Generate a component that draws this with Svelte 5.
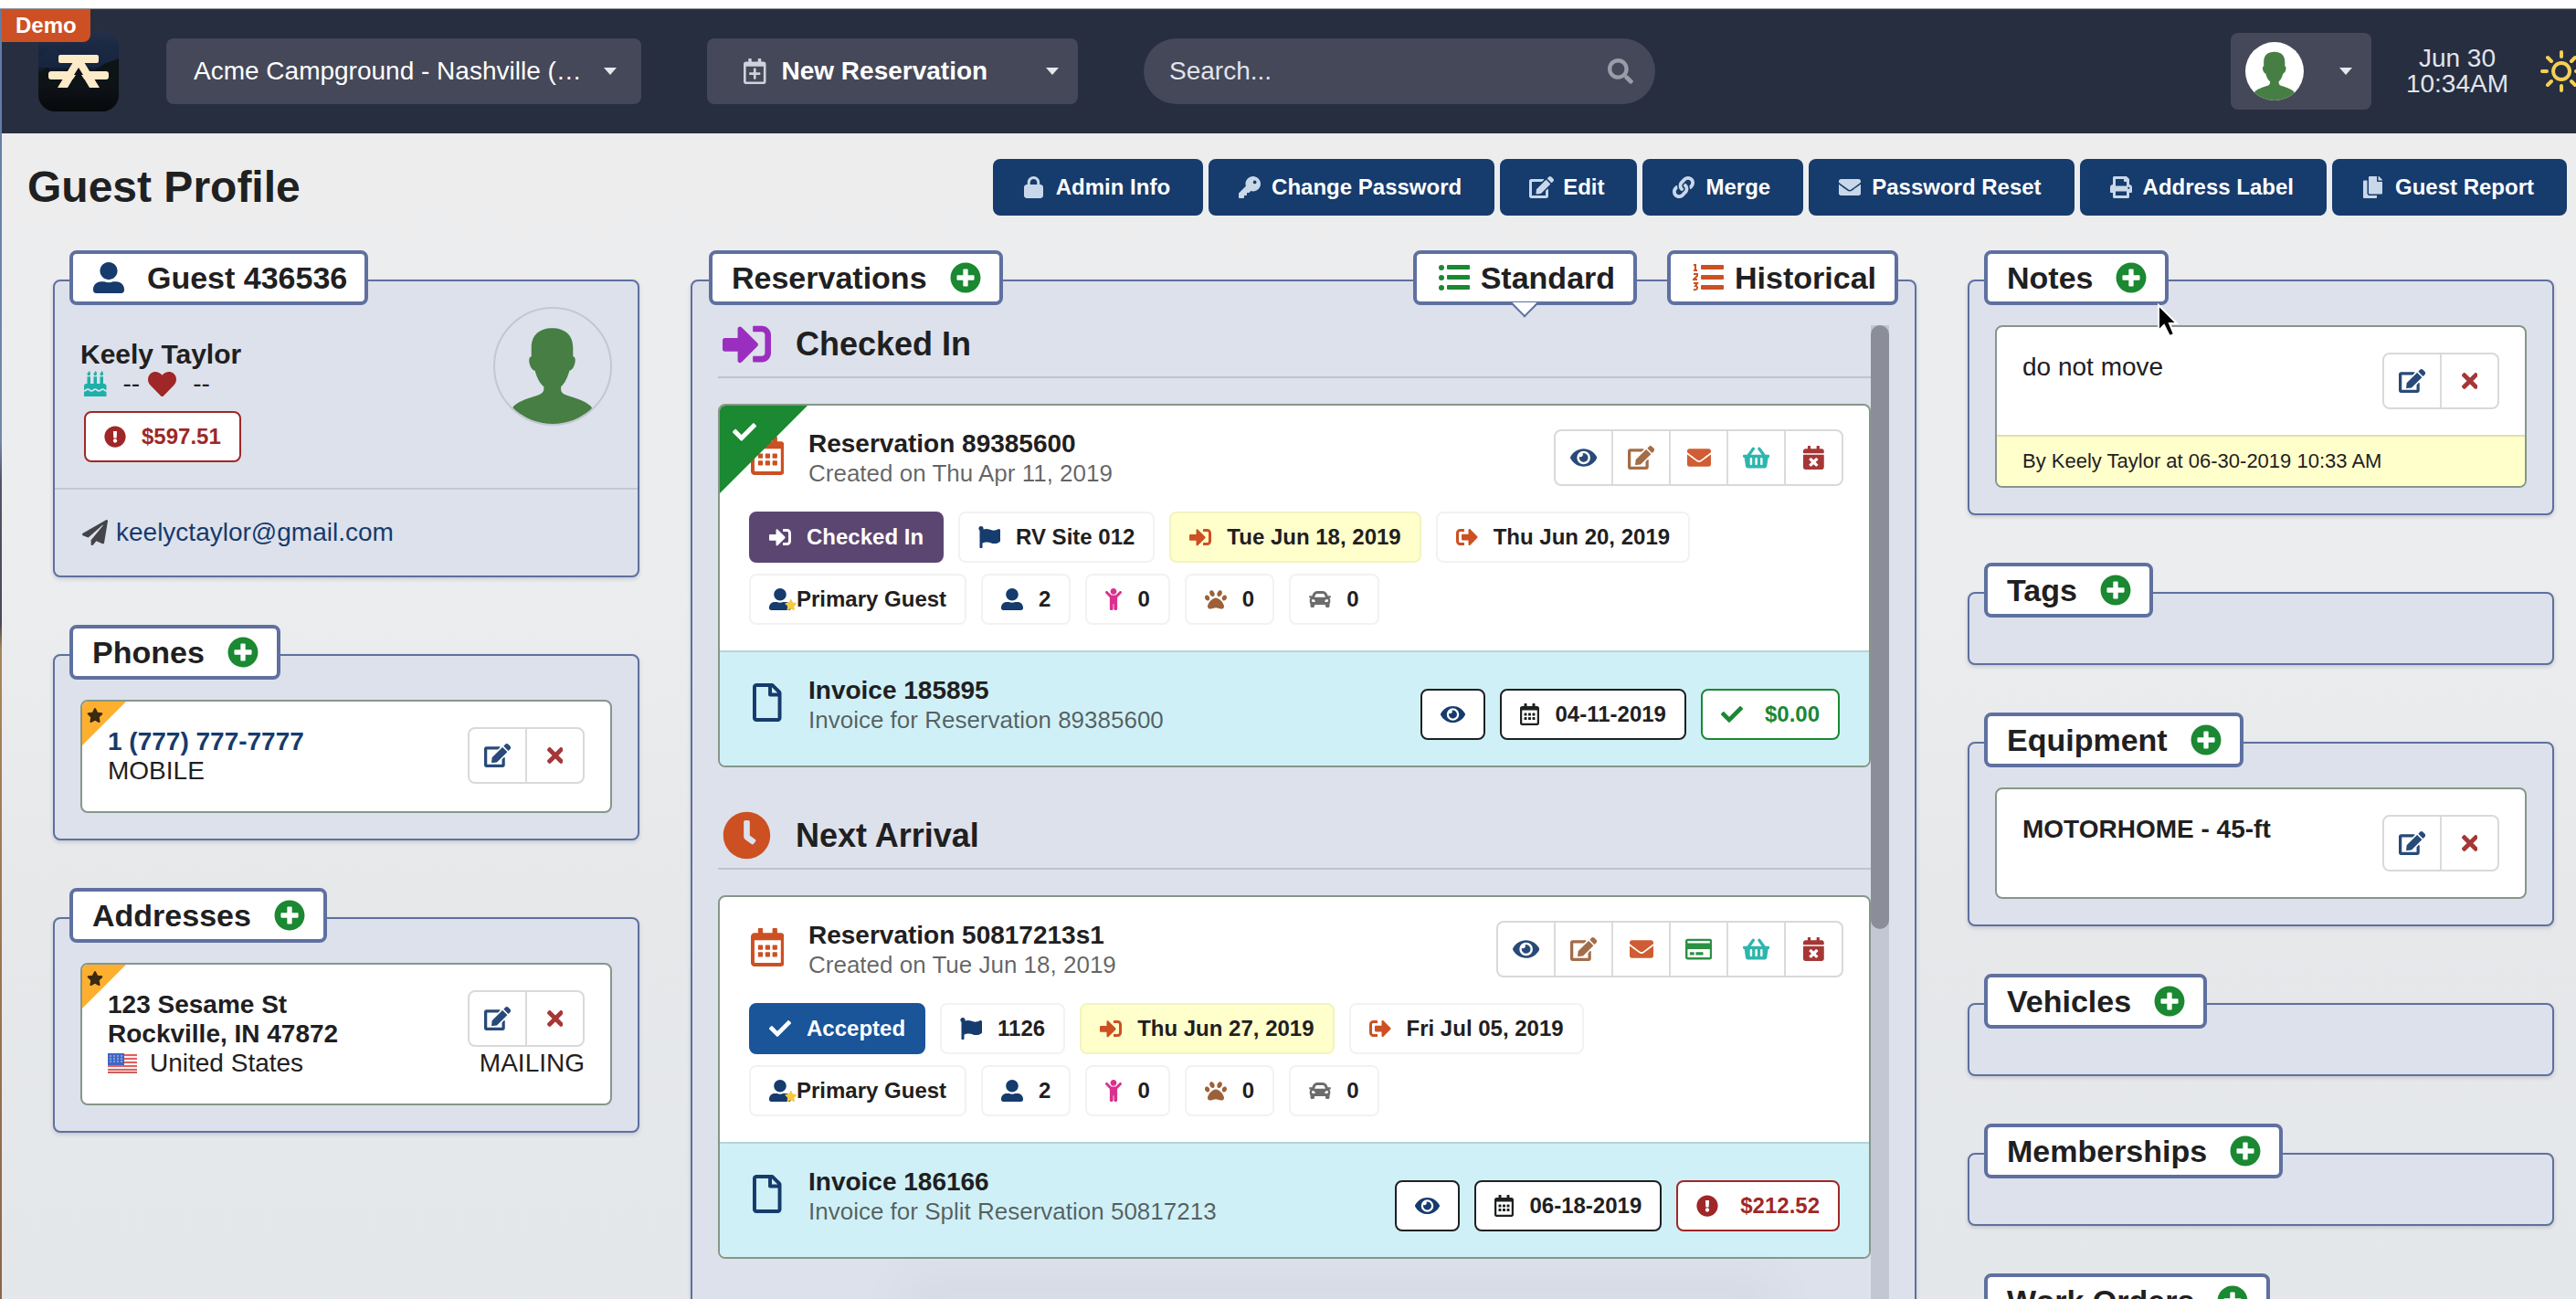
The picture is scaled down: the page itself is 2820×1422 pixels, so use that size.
<script>
  // [viewBox width, path]
  const icons = {
    lock: [448, "M144 144v48H304V144c0-44.2-35.8-80-80-80s-80 35.8-80 80zM80 192V144C80 64.5 144.5 0 224 0s144 64.5 144 144v48h16c35.3 0 64 28.7 64 64V448c0 35.3-28.7 64-64 64H64c-35.3 0-64-28.7-64-64V256c0-35.3 28.7-64 64-64H80z"],
    key: [512, "M336 352c97.2 0 176-78.8 176-176S433.2 0 336 0S160 78.8 160 176c0 18.7 2.9 36.8 8.3 53.7L7 391c-4.5 4.5-7 10.6-7 17v80c0 13.3 10.7 24 24 24h80c13.3 0 24-10.7 24-24V448h40c13.3 0 24-10.7 24-24V384h40c6.4 0 12.5-2.5 17-7l33.3-33.3c16.9 5.4 35 8.3 53.7 8.3zM376 96a40 40 0 1 1 0 80 40 40 0 1 1 0-80z"],
    edit: [576, "M402.6 83.2l90.2 90.2c3.8 3.8 3.8 10 0 13.8L274.4 405.6l-92.8 10.3c-12.4 1.4-22.9-9.1-21.5-21.5l10.3-92.8L388.8 83.2c3.8-3.8 10-3.8 13.8 0zm162-22.9l-48.8-48.8c-15.2-15.2-39.9-15.2-55.2 0l-35.4 35.4c-3.8 3.8-3.8 10 0 13.8l90.2 90.2c3.8 3.8 10 3.8 13.8 0l35.4-35.4c15.2-15.3 15.2-40 0-55.2zM384 346.2V448H64V128h229.8c3.2 0 6.2-1.3 8.5-3.5l40-40c7.6-7.6 2.2-20.5-8.5-20.5H48C21.5 64 0 85.5 0 112v352c0 26.5 21.5 48 48 48h352c26.5 0 48-21.5 48-48V306.2c0-10.7-12.9-16-20.5-8.5l-40 40c-2.2 2.3-3.5 5.3-3.5 8.5z"],
    link: [512, "M326.612 185.391c59.747 59.809 58.927 155.698.36 214.59-.11.12-.24.25-.36.37l-67.2 67.2c-59.27 59.27-155.699 59.262-214.96 0-59.27-59.26-59.27-155.7 0-214.96l37.106-37.106c9.84-9.84 26.786-3.3 27.294 10.606.648 17.722 3.826 35.527 9.69 52.721 1.986 5.822.567 12.262-3.783 16.612l-13.087 13.087c-28.026 28.026-28.905 73.66-1.155 101.96 28.024 28.579 74.086 28.749 102.325.51l67.2-67.19c28.191-28.191 28.073-73.757 0-101.83-3.701-3.694-7.429-6.564-10.341-8.569a16.037 16.037 0 0 1-6.947-12.606c-.396-10.567 3.348-21.456 11.698-29.806l21.054-21.055c5.521-5.521 14.182-6.199 20.584-1.731a152.482 152.482 0 0 1 20.522 17.197zM467.547 44.449c-59.261-59.262-155.69-59.27-214.96 0l-67.2 67.2c-.12.12-.25.25-.36.37-58.566 58.892-59.387 154.781.36 214.59a152.454 152.454 0 0 0 20.521 17.196c6.402 4.468 15.064 3.789 20.584-1.731l21.054-21.055c8.35-8.35 12.094-19.239 11.698-29.806a16.037 16.037 0 0 0-6.947-12.606c-2.912-2.005-6.64-4.875-10.341-8.569-28.073-28.073-28.191-73.639 0-101.83l67.2-67.19c28.239-28.239 74.3-28.069 102.325.51 27.75 28.3 26.872 73.934-1.155 101.96l-13.087 13.087c-4.35 4.35-5.769 10.79-3.783 16.612 5.864 17.194 9.042 34.999 9.69 52.721.509 13.906 17.454 20.446 27.294 10.606l37.106-37.106c59.271-59.259 59.271-155.699.001-214.959z"],
    envelope: [512, "M502.3 190.8c3.9-3.1 9.7-.2 9.7 4.7V400c0 26.5-21.5 48-48 48H48c-26.5 0-48-21.5-48-48V195.6c0-5 5.7-7.8 9.7-4.7 22.4 17.4 52.1 39.5 154.1 113.6 21.1 15.4 56.7 47.8 92.2 47.6 35.7.3 72-32.8 92.3-47.6 102-74.1 131.6-96.3 154-113.7zM256 320c23.2.4 56.6-29.2 73.4-41.4 132.7-96.3 142.8-104.7 173.4-128.7 5.8-4.5 9.2-11.5 9.2-18.9v-19c0-26.5-21.5-48-48-48H48c-26.5 0-48 21.5-48 48v19c0 7.4 3.4 14.3 9.2 18.9 30.6 23.9 40.7 32.4 173.4 128.7 16.8 12.2 50.2 41.8 73.4 41.4z"],
    print: [512, "M448 192V77.25c0-8.49-3.37-16.62-9.37-22.63L393.37 9.37c-6-6-14.14-9.37-22.63-9.37H96C78.33 0 64 14.33 64 32v160c-35.35 0-64 28.65-64 64v112c0 8.84 7.16 16 16 16h48v96c0 17.67 14.33 32 32 32h320c17.67 0 32-14.33 32-32v-96h48c8.84 0 16-7.16 16-16V256c0-35.35-28.65-64-64-64zm-64 256H128v-96h256v96zm0-224H128V64h192v48c0 8.84 7.16 16 16 16h48v96zm48 72c-13.25 0-24-10.75-24-24 0-13.26 10.75-24 24-24s24 10.74 24 24c0 13.25-10.75 24-24 24z"],
    copy: [448, "M320 448v40c0 13.255-10.745 24-24 24H24c-13.255 0-24-10.745-24-24V120c0-13.255 10.745-24 24-24h72v296c0 30.879 25.121 56 56 56h168zm0-344V0H152c-13.255 0-24 10.745-24 24v368c0 13.255 10.745 24 24 24h272c13.255 0 24-10.745 24-24V128H344c-13.2 0-24-10.8-24-24zm120.971-31.029L375.029 7.029A24 24 0 0 0 358.059 0H352v96h96v-6.059a24 24 0 0 0-7.029-16.97z"],
    user: [512, "M256 288c79.5 0 144-64.5 144-144S335.5 0 256 0 112 64.5 112 144s64.5 144 144 144zm128 32h-55.1c-22.2 10.2-46.9 16-72.9 16s-50.6-5.8-72.9-16H128c-70.7 0-128 57.3-128 128v16c0 26.5 21.5 48 48 48h416c26.5 0 48-21.5 48-48v-16c0-70.7-57.3-128-128-128z"],
    plus: [512, "M256 8C119 8 8 119 8 256s111 248 248 248 248-111 248-248S393 8 256 8zm144 276c0 6.6-5.4 12-12 12h-92v92c0 6.6-5.4 12-12 12h-56c-6.6 0-12-5.4-12-12v-92h-92c-6.6 0-12-5.4-12-12v-56c0-6.6 5.4-12 12-12h92v-92c0-6.6 5.4-12 12-12h56c6.6 0 12 5.4 12 12v92h92c6.6 0 12 5.4 12 12v56z"],
    alert: [512, "M504 256c0 136.997-111.043 248-248 248S8 392.997 8 256C8 119.083 119.043 8 256 8s248 111.083 248 248zm-248 50c-25.405 0-46 20.595-46 46s20.595 46 46 46 46-20.595 46-46-20.595-46-46-46zm-43.673-165.346l7.418 136c.347 6.364 5.609 11.346 11.982 11.346h48.546c6.373 0 11.635-4.982 11.982-11.346l7.418-136c.375-6.874-5.098-12.654-11.982-12.654h-63.383c-6.884 0-12.356 5.78-11.981 12.654z"],
    clock: [512, "M256 8C119 8 8 119 8 256S119 504 256 504 504 393 504 256 393 8 256 8zm92.49 313l-20 25a16 16 0 0 1-22.49 2.5l-67-49.72a40 40 0 0 1-15-31.23V112a16 16 0 0 1 16-16h32a16 16 0 0 1 16 16V256l58 42.5A16 16 0 0 1 348.49 321Z"],
    check: [512, "M173.898 439.404l-166.4-166.4c-9.997-9.997-9.997-26.206 0-36.204l36.203-36.204c9.997-9.998 26.207-9.998 36.204 0L192 312.69 432.095 72.596c9.997-9.997 26.207-9.997 36.204 0l36.203 36.204c9.997 9.997 9.997 26.206 0 36.204l-294.4 294.401c-9.998 9.997-26.207 9.997-36.204-.001z"],
    times: [352, "M242.72 256l100.07-100.07c12.28-12.28 12.28-32.19 0-44.48l-22.24-22.24c-12.28-12.28-32.19-12.28-44.48 0L176 189.28 75.93 89.21c-12.28-12.28-32.19-12.28-44.48 0L9.21 111.45c-12.28 12.28-12.28 32.19 0 44.48L109.28 256 9.21 356.07c-12.28 12.28-12.28 32.19 0 44.48l22.24 22.24c12.28 12.28 32.2 12.28 44.48 0L176 322.72l100.07 100.07c12.28 12.28 32.2 12.28 44.48 0l22.24-22.24c12.28-12.28 12.28-32.19 0-44.48L242.72 256z"],
    calendar: [448, "M148 288h-40c-6.6 0-12-5.4-12-12v-40c0-6.6 5.4-12 12-12h40c6.6 0 12 5.4 12 12v40c0 6.6-5.4 12-12 12zm108-12v-40c0-6.6-5.4-12-12-12h-40c-6.6 0-12 5.4-12 12v40c0 6.6 5.4 12 12 12h40c6.6 0 12-5.4 12-12zm96 0v-40c0-6.6-5.4-12-12-12h-40c-6.6 0-12 5.4-12 12v40c0 6.6 5.4 12 12 12h40c6.6 0 12-5.4 12-12zm-96 96v-40c0-6.6-5.4-12-12-12h-40c-6.6 0-12 5.4-12 12v40c0 6.6 5.4 12 12 12h40c6.6 0 12-5.4 12-12zm-96 0v-40c0-6.6-5.4-12-12-12h-40c-6.6 0-12 5.4-12 12v40c0 6.6 5.4 12 12 12h40c6.6 0 12-5.4 12-12zm192 0v-40c0-6.6-5.4-12-12-12h-40c-6.6 0-12 5.4-12 12v40c0 6.6 5.4 12 12 12h40c6.6 0 12-5.4 12-12zm96-260v352c0 26.5-21.5 48-48 48H48c-26.5 0-48-21.5-48-48V112c0-26.5 21.5-48 48-48h48V12c0-6.6 5.4-12 12-12h40c6.6 0 12 5.4 12 12v52h128V12c0-6.6 5.4-12 12-12h40c6.6 0 12 5.4 12 12v52h48c26.5 0 48 21.5 48 48zm-48 346V160H48v298c0 3.3 2.7 6 6 6h340c3.3 0 6-2.7 6-6z"],
    calendarPlus: [448, "M336 292v24c0 6.6-5.4 12-12 12h-76v76c0 6.6-5.4 12-12 12h-24c-6.6 0-12-5.4-12-12v-76h-76c-6.6 0-12-5.4-12-12v-24c0-6.6 5.4-12 12-12h76v-76c0-6.6 5.4-12 12-12h24c6.6 0 12 5.4 12 12v76h76c6.6 0 12 5.4 12 12zm112-180v352c0 26.5-21.5 48-48 48H48c-26.5 0-48-21.5-48-48V112c0-26.5 21.5-48 48-48h48V12c0-6.6 5.4-12 12-12h40c6.6 0 12 5.4 12 12v52h128V12c0-6.6 5.4-12 12-12h40c6.6 0 12 5.4 12 12v52h48c26.5 0 48 21.5 48 48zm-48 346V160H48v298c0 3.3 2.7 6 6 6h340c3.3 0 6-2.7 6-6z"],
    calendarTimes: [448, "M436 160H12c-6.6 0-12-5.4-12-12v-36c0-26.5 21.5-48 48-48h48V12c0-6.6 5.4-12 12-12h40c6.6 0 12 5.4 12 12v52h128V12c0-6.6 5.4-12 12-12h40c6.6 0 12 5.4 12 12v52h48c26.5 0 48 21.5 48 48v36c0 6.6-5.4 12-12 12zM12 192h424c6.6 0 12 5.4 12 12v260c0 26.5-21.5 48-48 48H48c-26.5 0-48-21.5-48-48V204c0-6.6 5.4-12 12-12zm257.3 160l48.1-48.1c4.7-4.7 4.7-12.3 0-17l-28.3-28.3c-4.7-4.7-12.3-4.7-17 0L224 306.7l-48.1-48.1c-4.7-4.7-12.3-4.7-17 0l-28.3 28.3c-4.7 4.7-4.7 12.3 0 17l48.1 48.1-48.1 48.1c-4.7 4.7-4.7 12.3 0 17l28.3 28.3c4.7 4.7 12.3 4.7 17 0l48.1-48.1 48.1 48.1c4.7 4.7 12.3 4.7 17 0l28.3-28.3c4.7-4.7 4.7-12.3 0-17L269.3 352z"],
    signIn: [512, "M416 448h-84c-6.6 0-12-5.4-12-12v-40c0-6.6 5.4-12 12-12h84c17.7 0 32-14.3 32-32V160c0-17.7-14.3-32-32-32h-84c-6.6 0-12-5.4-12-12V76c0-6.6 5.4-12 12-12h84c53 0 96 43 96 96v192c0 53-43 96-96 96zm-47-201L201 79c-15-15-41-4.5-41 17v96H24c-13.3 0-24 10.7-24 24v96c0 13.3 10.7 24 24 24h136v96c0 21.5 26 32 41 17l168-168c9.3-9.4 9.3-24.6 0-34z"],
    signOut: [512, "M497 273L329 441c-15 15-41 4.5-41-17v-96H152c-13.3 0-24-10.7-24-24v-96c0-13.3 10.7-24 24-24h136V88c0-21.4 25.9-32 41-17l168 168c9.3 9.4 9.3 24.6 0 34zM192 436v-40c0-6.6-5.4-12-12-12H96c-17.7 0-32-14.3-32-32V160c0-17.7 14.3-32 32-32h84c6.6 0 12-5.4 12-12V76c0-6.6-5.4-12-12-12H96c-53 0-96 43-96 96v192c0 53 43 96 96 96h84c6.6 0 12-5.4 12-12z"],
    flag: [512, "M349.565 98.783C295.978 98.783 251.721 64 184.348 64c-24.955 0-47.309 4.384-68.045 12.013a55.947 55.947 0 0 0 3.586-23.562C118.117 24.015 94.806 1.206 66.338.048 34.345-1.254 8 24.296 8 56c0 19.026 9.497 35.825 24 45.945V488c0 13.255 10.745 24 24 24h16c13.255 0 24-10.745 24-24v-94.4c28.311-12.064 63.582-22.122 114.435-22.122 53.588 0 97.844 34.783 165.217 34.783 48.169 0 86.667-16.294 122.505-40.858C506.84 359.452 512 349.571 512 339.045v-243.1c0-23.393-24.269-38.87-45.485-29.016-34.338 15.948-76.454 31.854-116.95 31.854z"],
    child: [384, "M120 72c0-39.765 32.235-72 72-72s72 32.235 72 72c0 39.764-32.235 72-72 72s-72-32.236-72-72zm254.627 1.373c-12.496-12.497-32.758-12.497-45.254 0L242.745 160H141.254L54.627 73.373c-12.496-12.497-32.758-12.497-45.254 0-12.497 12.497-12.497 32.758 0 45.255L104 213.254V480c0 17.673 14.327 32 32 32h16c17.673 0 32-14.327 32-32V368h16v112c0 17.673 14.327 32 32 32h16c17.673 0 32-14.327 32-32V213.254l94.627-94.627c12.497-12.496 12.497-32.757 0-45.254z"],
    paw: [512, "M256 224c-79.41 0-192 122.76-192 200.25 0 34.9 26.81 55.75 71.74 55.75 48.84 0 81.09-25.08 120.26-25.08 39.51 0 71.85 25.08 120.26 25.08 44.93 0 71.74-20.85 71.74-55.75C448 346.76 335.41 224 256 224zm-147.28-12.61c-10.4-34.65-42.44-57.09-71.56-50.13-29.12 6.96-44.29 40.69-33.89 75.34 10.4 34.65 42.44 57.09 71.56 50.13 29.12-6.96 44.29-40.69 33.89-75.34zm84.72-20.78c30.94-8.14 42.93-46.08 28.14-85.96-14.79-39.88-46.79-65.36-77.73-57.22-30.94 8.14-42.93 46.08-28.14 85.96 14.79 39.88 46.79 65.36 77.73 57.22zm281.39-29.34c-29.12-6.96-61.15 15.48-71.56 50.13-10.4 34.65 4.77 68.38 33.89 75.34 29.12 6.96 61.15-15.48 71.56-50.13 10.4-34.65-4.77-68.38-33.89-75.34zm-156.27 29.34c30.94 8.14 62.94-17.34 77.73-57.22 14.79-39.88 2.8-77.82-28.14-85.96-30.94-8.14-62.94 17.34-77.73 57.22-14.79 39.88-2.8 77.82 28.14 85.96z"],
    car: [512, "M499.99 176h-59.87l-16.64-41.6C406.38 91.63 365.57 64 319.5 64h-127c-46.06 0-86.88 27.63-103.99 70.4L71.87 176H12.01C4.2 176-1.53 183.34.37 190.91l6 24C7.7 220.25 12.5 224 18.01 224h20.07C24.65 235.73 16 252.78 16 272v48c0 16.12 6.16 30.67 16 41.93V416c0 17.67 14.33 32 32 32h32c17.67 0 32-14.33 32-32v-32h256v32c0 17.67 14.33 32 32 32h32c17.67 0 32-14.33 32-32v-54.07c9.84-11.25 16-25.8 16-41.93v-48c0-19.22-8.65-36.27-22.07-48H494c5.51 0 10.31-3.75 11.64-9.09l6-24c1.89-7.57-3.84-14.91-11.65-14.91zm-352.06-17.83c7.29-18.22 24.94-30.17 44.57-30.17h127c19.63 0 37.28 11.95 44.57 30.17L384 208H128l19.93-49.83zM96 319.8c-19.2 0-32-12.76-32-31.9S76.8 256 96 256s48 28.71 48 47.85-28.8 15.95-48 15.95zm320 0c-19.2 0-48 3.19-48-15.95S396.8 256 416 256s32 12.76 32 31.9-12.8 31.9-32 31.9z"],
    file: [384, "M369.9 97.9L286 14C277 5 264.8-.1 252.1-.1H48C21.5 0 0 21.5 0 48v416c0 26.5 21.5 48 48 48h288c26.5 0 48-21.5 48-48V131.9c0-12.7-5.1-25-14.1-34zM332.1 128H256V51.9l76.1 76.1zM48 464V48h160v104c0 13.3 10.7 24 24 24h104v288H48z"],
    eye: [576, "M572.52 241.4C518.29 135.59 410.93 64 288 64S57.68 135.64 3.48 241.41a32.35 32.35 0 0 0 0 29.19C57.71 376.41 165.07 448 288 448s230.32-71.64 284.52-177.41a32.35 32.35 0 0 0 0-29.19zM288 400a144 144 0 1 1 144-144 143.93 143.93 0 0 1-144 144zm0-240a95.31 95.31 0 0 0-25.31 3.79 47.85 47.85 0 0 1-66.9 66.9A95.78 95.78 0 1 0 288 160z"],
    basket: [576, "M576 216v16c0 13.255-10.745 24-24 24h-8l-26.113 182.788C514.509 462.435 494.257 480 470.37 480H105.63c-23.887 0-44.139-17.565-47.518-41.212L32 256h-8c-13.255 0-24-10.745-24-24v-16c0-13.255 10.745-24 24-24h67.341l106.78-146.821c10.395-14.292 30.407-17.453 44.701-7.058 14.293 10.395 17.453 30.408 7.058 44.701L170.477 192h235.046L326.12 82.821c-10.395-14.292-7.234-34.306 7.059-44.701 14.291-10.395 34.306-7.235 44.701 7.058L484.659 192H552c13.255 0 24 10.745 24 24zM312 392V280c0-13.255-10.745-24-24-24s-24 10.745-24 24v112c0 13.255 10.745 24 24 24s24-10.745 24-24zm112 0V280c0-13.255-10.745-24-24-24s-24 10.745-24 24v112c0 13.255 10.745 24 24 24s24-10.745 24-24zm-224 0V280c0-13.255-10.745-24-24-24s-24 10.745-24 24v112c0 13.255 10.745 24 24 24s24-10.745 24-24z"],
    card: [576, "M527.9 32H48.1C21.5 32 0 53.5 0 80v352c0 26.5 21.5 48 48.1 48h479.8c26.6 0 48.1-21.5 48.1-48V80c0-26.5-21.5-48-48.1-48zM54.1 80h467.8c3.3 0 6 2.7 6 6v42H48.1V86c0-3.3 2.7-6 6-6zm467.8 352H54.1c-3.3 0-6-2.7-6-6V256h479.8v170c0 3.3-2.7 6-6 6zM192 332v40c0 6.6-5.4 12-12 12h-72c-6.6 0-12-5.4-12-12v-40c0-6.6 5.4-12 12-12h72c6.6 0 12 5.4 12 12zm192 0v40c0 6.6-5.4 12-12 12H236c-6.6 0-12-5.4-12-12v-40c0-6.6 5.4-12 12-12h136c6.6 0 12 5.4 12 12z"],
    cake: [448, "M448 384c-28.02 0-31.26-32-74.5-32-43.43 0-46.825 32-74.75 32-27.695 0-31.454-32-74.75-32-42.842 0-47.218 32-74.5 32-28.148 0-31.202-32-74.75-32-43.547 0-46.653 32-74.75 32v-80c0-26.5 21.5-48 48-48h16V112h64v144h64V112h64v144h64V112h64v144h16c26.5 0 48 21.5 48 48v80zm0 128H0v-96c43.356 0 46.767-32 74.75-32 27.951 0 31.253 32 74.75 32 42.843 0 47.217-32 74.5-32 28.148 0 31.201 32 74.75 32 43.357 0 46.767-32 74.75-32 27.488 0 31.252 32 74.5 32v96zM96 96c-17.75 0-32-14.25-32-32 0-31 32-23 32-64 12 0 32 29.5 32 56s-14.25 40-32 40zm128 0c-17.75 0-32-14.25-32-32 0-31 32-23 32-64 12 0 32 29.5 32 56s-14.25 40-32 40zm128 0c-17.75 0-32-14.25-32-32 0-31 32-23 32-64 12 0 32 29.5 32 56s-14.25 40-32 40z"],
    heart: [512, "M462.3 62.6C407.5 15.9 326 24.3 275.7 76.2L256 96.5l-19.7-20.3C186.1 24.3 104.5 15.9 49.7 62.6c-62.8 53.6-66.1 149.8-9.9 207.9l193.5 199.8c12.5 12.9 32.8 12.9 45.3 0l193.5-199.8c56.3-58.1 53-154.3-9.8-207.9z"],
    plane: [512, "M476 3.2L12.5 270.6c-18.1 10.4-15.8 35.6 2.2 43.2L121 358.4l287.3-253.2c5.5-4.9 13.3 2.6 8.6 8.3L176 407v80.5c0 23.6 28.5 32.9 42.5 15.8L282 426l124.6 52.2c14.2 6 30.4-2.9 33-18.2l72-432C515 7.8 493.3-6.8 476 3.2z"],
    star: [576, "M259.3 17.8L194 150.2 47.9 171.5c-26.2 3.8-36.7 36.1-17.7 54.6l105.7 103-25 145.5c-4.5 26.3 23.2 46 46.4 33.7L288 439.6l130.7 68.7c23.2 12.2 50.9-7.4 46.4-33.7l-25-145.5 105.7-103c19-18.5 8.5-50.8-17.7-54.6L382 150.2 316.7 17.8c-11.7-23.6-45.6-23.9-57.4 0z"],
    search: [512, "M505 442.7L405.3 343c-4.5-4.5-10.6-7-17-7H372c27.6-35.3 44-79.7 44-128C416 93.1 322.9 0 208 0S0 93.1 0 208s93.1 208 208 208c48.3 0 92.7-16.4 128-44v16.3c0 6.4 2.5 12.5 7 17l99.7 99.7c9.4 9.4 24.6 9.4 33.9 0l28.3-28.3c9.4-9.4 9.4-24.6.1-34zM208 336c-70.7 0-128-57.2-128-128 0-70.7 57.2-128 128-128 70.7 0 128 57.2 128 128 0 70.7-57.2 128-128 128z"],
  };

  const pageActions = [
    { icon: "lock", label: "Admin Info" },
    { icon: "key", label: "Change Password" },
    { icon: "edit", label: "Edit" },
    { icon: "link", label: "Merge" },
    { icon: "envelope", label: "Password Reset" },
    { icon: "print", label: "Address Label" },
    { icon: "copy", label: "Guest Report" },
  ];

  const view = { icon: "eye", color: "navy", label: "View" };
  const edit = { icon: "edit", color: "brown", label: "Edit" };
  const email = { icon: "envelope", color: "orange", label: "Email" };
  const pay = { icon: "card", color: "green", label: "Payment" };
  const shop = { icon: "basket", color: "teal", label: "Shop" };
  const cancel = { icon: "calendarTimes", color: "red", label: "Cancel" };

  const editRemove = [
    { icon: "edit", color: "navy", label: "Edit" },
    { icon: "times", color: "red", label: "Remove" },
  ];

  const sections = [
    {
      title: "Checked In",
      icon: "signIn",
      color: "purple",
      here: true,
      name: "Reservation 89385600",
      created: "Created on Thu Apr 11, 2019",
      actions: [view, edit, email, shop, cancel],
      status: { icon: "signIn", label: "Checked In", kind: "checked-in" },
      site: "RV Site 012",
      arrive: "Tue Jun 18, 2019",
      depart: "Thu Jun 20, 2019",
      invoice: {
        name: "Invoice 185895",
        detail: "Invoice for Reservation 89385600",
        date: "04-11-2019",
        balance: "$0.00",
        due: false,
      },
    },
    {
      title: "Next Arrival",
      icon: "clock",
      color: "orange",
      here: false,
      name: "Reservation 50817213s1",
      created: "Created on Tue Jun 18, 2019",
      actions: [view, edit, email, pay, shop, cancel],
      status: { icon: "check", label: "Accepted", kind: "accepted" },
      site: "1126",
      arrive: "Thu Jun 27, 2019",
      depart: "Fri Jul 05, 2019",
      invoice: {
        name: "Invoice 186166",
        detail: "Invoice for Split Reservation 50817213",
        date: "06-18-2019",
        balance: "$212.52",
        due: true,
      },
    },
  ];

  const counts = [
    { icon: "user", color: "navy", value: 2 },
    { icon: "child", color: "pink", value: 0 },
    { icon: "paw", color: "brown", value: 0 },
    { icon: "car", color: "gray", value: 0 },
  ];
</script>

{#snippet icon(name, color = "")}
  <svg class="icon {color}" viewBox="0 0 {icons[name][0]} 512" aria-hidden="true">
    <path d={icons[name][1]} />
  </svg>
{/snippet}

{#snippet caret()}
  <svg class="caret" viewBox="0 0 16 9" aria-hidden="true"><path d="M0 0h16L8 9z" /></svg>
{/snippet}

{#snippet silhouette()}
  <svg class="silhouette" viewBox="0 0 130 130" aria-hidden="true">
    <path
      d="M64.500 22C50 22 41 30 41 44V54C36 54 39 69 45 70C48 80 51 85 55 88C55.500 93 54 95 50 97C38 101 29 103 21 110L10 130H120L108 110C100 103 91 101 79 97C75 95 74 93 74.500 88C78 85 81 80 84 70C90 69 93 54 88 54V44C88 30 79 22 64.500 22Z"
    />
  </svg>
{/snippet}

{#snippet tag(title)}
  <div class="tag">
    <h2>{title}</h2>
    <button class="add" aria-label="Add to {title}">{@render icon("plus")}</button>
  </div>
{/snippet}

{#snippet buttonGroup(actions)}
  <div class="button-group">
    {#each actions as action}
      <button aria-label={action.label}>{@render icon(action.icon, action.color)}</button>
    {/each}
  </div>
{/snippet}

<div class="app">
  <div class="top-strip"></div>
  <header>
    <span class="demo">Demo</span>
    <a class="logo" href="#home" aria-label="Home">
      <svg viewBox="0 0 88 88" aria-hidden="true">
        <defs>
          <linearGradient id="dusk" x1="0" y1="0" x2="0" y2="1">
            <stop offset="0" stop-color="#25304a" />
            <stop offset="0.4" stop-color="#10203a" />
            <stop offset="0.6" stop-color="#10151b" />
            <stop offset="1" stop-color="#07090b" />
          </linearGradient>
        </defs>
        <rect width="88" height="88" rx="18" fill="url(#dusk)" />
        <path d="M0 30L14 16 24 24 38 12 52 22 66 10 88 22V40H0z" fill="#1b2942" opacity="0.7" />
        <path d="M0 46L10 40 18 48 30 42 60 44 72 36 88 30V60H0z" fill="#0d1416" />
        <g fill="#fdeac8">
          <rect x="22" y="26" width="44" height="9" rx="2" />
          <rect x="11" y="44" width="66" height="9" rx="3" />
          <path d="M38 34h12l17 28H56L44 42 32 62H21z" />
        </g>
        <path d="M44 40l5 8h-2l4 6h-2l6 9H33l6-9h-2l4-6h-2z" fill="#0d1418" />
      </svg>
    </a>

    <label class="location">
      <select aria-label="Location">
        <option>Acme Campground - Nashville (…</option>
      </select>
      {@render caret()}
    </label>

    <button class="new-reservation">
      {@render icon("calendarPlus")}
      <span>New Reservation</span>
      {@render caret()}
    </button>

    <label class="search">
      <input type="text" placeholder="Search..." aria-label="Search" />
      {@render icon("search")}
    </label>

    <button class="account" aria-label="Account">
      <span class="avatar">{@render silhouette()}</span>
      {@render caret()}
    </button>
    <div class="clock">Jun 30<br />10:34AM</div>
    <svg class="sun" viewBox="0 0 48 48" aria-hidden="true">
      <circle cx="24" cy="24" r="9" />
      <path d="M24 3v5M24 40v5M3 24h5M40 24h5M9 9l4 4M35 35l4 4M9 39l4-4M35 13l4-4" />
    </svg>
  </header>

  <main>
    <div class="title-row">
      <h1>Guest Profile</h1>
      <div class="page-actions">
        {#each pageActions as action}
          <button>
            <span class="icon-box">{@render icon(action.icon)}</span>
            {action.label}
          </button>
        {/each}
      </div>
    </div>

    <div class="columns">
      <div class="column">
        <section class="panel">
          <div class="tag guest">
            {@render icon("user", "navy")}
            <h2>Guest 436536</h2>
          </div>
          <div class="guest-info">
            <div class="guest-text">
              <div class="guest-name">Keely Taylor</div>
              <div class="dates">
                {@render icon("cake", "teal")}
                <span>--</span>
                {@render icon("heart", "red")}
                <span>--</span>
              </div>
              <button class="pill due">{@render icon("alert")}$597.51</button>
            </div>
            <div class="photo">{@render silhouette()}</div>
          </div>
          <div class="guest-email">
            {@render icon("plane", "dark")}
            <a href="mailto:keelyctaylor@gmail.com">keelyctaylor@gmail.com</a>
          </div>
        </section>

        <section class="panel">
          {@render tag("Phones")}
          <div class="panel-body">
            <div class="card">
              <div class="corner star">{@render icon("star")}</div>
              <div class="card-body">
                <div>
                  <a class="strong" href="tel:17777777777">1 (777) 777-7777</a>
                  <div>MOBILE</div>
                </div>
                {@render buttonGroup(editRemove)}
              </div>
            </div>
          </div>
        </section>

        <section class="panel">
          {@render tag("Addresses")}
          <div class="panel-body">
            <div class="card">
              <div class="corner star">{@render icon("star")}</div>
              <div class="card-body">
                <div>
                  <div class="strong">123 Sesame St</div>
                  <div class="strong">Rockville, IN 47872</div>
                  <div class="country">
                    <svg class="flag" viewBox="0 0 32 22" aria-hidden="true">
                      <rect width="32" height="22" fill="#f6f3f4" />
                      <path d="M0 2h32M0 6h32M0 10h32M0 14h32M0 18h32" stroke="#e4605c" stroke-width="2" />
                      <path d="M0 21h32" stroke="#c9625f" stroke-width="2" />
                      <rect width="18" height="13" fill="#3f66c4" />
                      <path d="M2 3h14M2 6h14M2 9h14" stroke="#c9d6f5" stroke-dasharray="2 2" />
                    </svg>
                    United States
                  </div>
                </div>
                <div class="address-side">
                  {@render buttonGroup(editRemove)}
                  <div>MAILING</div>
                </div>
              </div>
            </div>
          </div>
        </section>
      </div>

      <section class="panel reservations">
        <div class="tabs">
          {@render tag("Reservations")}
          <button class="tag tab active">
            <svg class="list green" viewBox="0 0 34 32" aria-hidden="true">
              <circle cx="3" cy="5" r="3" /><circle cx="3" cy="16" r="3" /><circle cx="3" cy="27" r="3" />
              <rect x="9" y="2" width="25" height="5" rx="1" />
              <rect x="9" y="13" width="25" height="5" rx="1" />
              <rect x="9" y="24" width="25" height="5" rx="1" />
            </svg>
            Standard
          </button>
          <button class="tag tab">
            <svg class="list orange" viewBox="0 0 34 32" aria-hidden="true">
              <path
                d="M1 2h2v6M1 8h4M1 12h4v2l-4 4h4M1 22h4l-2 3c3 0 3 5-2 4"
                fill="none"
                stroke="currentColor"
                stroke-width="2"
              />
              <rect x="9" y="2" width="25" height="5" rx="1" />
              <rect x="9" y="13" width="25" height="5" rx="1" />
              <rect x="9" y="24" width="25" height="5" rx="1" />
            </svg>
            Historical
          </button>
        </div>

        <div class="scroll-area">
          <div class="scroll-content">
            {#each sections as section}
              <div class="section">
                <div class="section-title">
                  {@render icon(section.icon, section.color)}
                  <h3>{section.title}</h3>
                </div>
                <article class="card">
                  <div class="reservation">
                    <div class="row">
                      <div class="row-icon">{@render icon("calendar", "orange")}</div>
                      <div class="row-text">
                        <div class="strong">{section.name}</div>
                        <div class="muted">{section.created}</div>
                      </div>
                      {@render buttonGroup(section.actions)}
                    </div>
                    <div class="pills">
                      <span class="pill {section.status.kind}">
                        {@render icon(section.status.icon)}{section.status.label}
                      </span>
                      <span class="pill">{@render icon("flag", "navy")}{section.site}</span>
                      <span class="pill arrive">{@render icon("signIn", "orange")}{section.arrive}</span>
                      <span class="pill">{@render icon("signOut", "orange")}{section.depart}</span>
                    </div>
                    <div class="pills">
                      <span class="pill primary">
                        <span class="starred">
                          {@render icon("user", "navy")}
                          {@render icon("star", "yellow")}
                        </span>
                        Primary Guest
                      </span>
                      {#each counts as count}
                        <span class="pill">{@render icon(count.icon, count.color)}{count.value}</span>
                      {/each}
                    </div>
                  </div>
                  <div class="row invoice">
                    <div class="row-icon">{@render icon("file", "navy")}</div>
                    <div class="row-text">
                      <div class="strong">{section.invoice.name}</div>
                      <div class="muted">{section.invoice.detail}</div>
                    </div>
                    <div class="invoice-actions">
                      <button class="pill outline" aria-label="View invoice">
                        {@render icon("eye", "navy")}
                      </button>
                      <button class="pill outline">
                        {@render icon("calendar")}{section.invoice.date}
                      </button>
                      <button class="pill balance" class:due={section.invoice.due} class:paid={!section.invoice.due}>
                        {@render icon(section.invoice.due ? "alert" : "check")}{section.invoice.balance}
                      </button>
                    </div>
                  </div>
                  {#if section.here}
                    <div class="corner here">{@render icon("check")}</div>
                  {/if}
                </article>
              </div>
            {/each}
          </div>
          <div class="scrollbar"><div class="thumb"></div></div>
        </div>
      </section>

      <div class="column">
        <section class="panel">
          {@render tag("Notes")}
          <svg class="cursor" viewBox="0 0 24 38" aria-hidden="true">
            <path d="M2 2v28l6-6 6 12 5-2-5-12h8z" />
          </svg>
          <div class="panel-body">
            <div class="card">
              <div class="card-body">
                <div>do not move</div>
                {@render buttonGroup(editRemove)}
              </div>
              <div class="note-footer">By Keely Taylor at 06-30-2019 10:33 AM</div>
            </div>
          </div>
        </section>

        <section class="panel empty">{@render tag("Tags")}</section>

        <section class="panel">
          {@render tag("Equipment")}
          <div class="panel-body">
            <div class="card">
              <div class="card-body">
                <div class="strong">MOTORHOME - 45-ft</div>
                {@render buttonGroup(editRemove)}
              </div>
            </div>
          </div>
        </section>

        <section class="panel empty">{@render tag("Vehicles")}</section>
        <section class="panel empty">{@render tag("Memberships")}</section>
        <section class="panel empty">{@render tag("Work Orders")}</section>
      </div>
    </div>
  </main>
  <div class="bottom-shadow"></div>
</div>

<style>
  :global(body) {
    font-family: "Liberation Sans", Arial, sans-serif;
    font-size: 28px;
    line-height: 32px;
    color: #1f2021;
  }

  .app {
    position: relative;
    box-sizing: border-box;
    height: 100vh;
    overflow: hidden;
    padding-left: 2px;
    background: linear-gradient(#5f7ba6 0, #7288ab 34%, #55536a 37%, #4c4855 48%, #a5855c 50%, #8c6546 100%);
  }

  button,
  input,
  select {
    font: inherit;
    color: inherit;
    margin: 0;
    padding: 0;
    border: 0;
    background: none;
  }

  button {
    cursor: pointer;
  }

  h1,
  h2,
  h3 {
    margin: 0;
  }

  a {
    color: #163b6d;
    text-decoration: none;
  }

  .icon {
    flex: none;
    display: block;
    height: 1em;
    fill: currentColor;
  }

  .navy { color: #163b6d; }
  .brown { color: #9c6139; }
  .orange { color: #cc5022; }
  .green { color: #1b8832; }
  .teal { color: #1cb0a8; }
  .red { color: #9f2727; }
  .purple { color: #9a2fbf; }
  .pink { color: #db3090; }
  .gray { color: #6c6c6c; }
  .yellow { color: #f5c93f; }
  .dark { color: #43444a; }

  .top-strip {
    height: 9px;
    margin-left: -2px;
    background: #fff;
    border-bottom: 1px solid #96989c;
  }

  /* Header bar */
  header {
    position: relative;
    display: flex;
    align-items: center;
    box-sizing: border-box;
    height: 136px;
    padding-left: 40px;
    background: #262e40;
    color: #fff;
  }

  .demo {
    position: absolute;
    z-index: 1;
    top: 0;
    left: 0;
    padding: 2px 15px 2px;
    border-bottom-right-radius: 8px;
    background: #cc5024;
    font-size: 24px;
    font-weight: bold;
  }

  .logo {
    width: 88px;
    height: 88px;
    margin-right: 52px;
  }

  .logo svg {
    display: block;
  }

  .caret {
    flex: none;
    width: 14px;
    height: 8px;
    fill: #e6e8ec;
  }

  .location,
  .new-reservation,
  .search {
    display: flex;
    align-items: center;
    box-sizing: border-box;
    height: 72px;
    margin-right: 72px;
    border-radius: 8px;
    background: #454859;
  }

  .location {
    flex: 0 1 520px;
    position: relative;
  }

  .location select {
    width: 100%;
    height: 100%;
    padding: 0 60px 0 30px;
    appearance: none;
    outline: 0;
  }

  .location .caret {
    position: absolute;
    right: 27px;
  }

  .new-reservation {
    flex: 0 1 406px;
    padding: 0 21px 0 40px;
    font-weight: bold;
  }

  .new-reservation span {
    flex: 1;
    margin-left: 17px;
    text-align: left;
  }

  .new-reservation .icon {
    color: #cfd2da;
  }

  .search {
    flex: 0 1 560px;
    padding: 0 24px 0 28px;
    border-radius: 36px;
    color: #9a9ca8;
  }

  .search input {
    flex: 1;
    min-width: 0;
    outline: 0;
    color: #fff;
  }

  .search input::placeholder {
    color: #e2e4ea;
    opacity: 1;
  }

  .account {
    display: flex;
    align-items: center;
    justify-content: space-between;
    box-sizing: border-box;
    width: 154px;
    height: 84px;
    margin-left: auto;
    padding: 0 21px 0 16px;
    border-radius: 8px;
    background: #454859;
  }

  .avatar {
    width: 64px;
    height: 64px;
    border-radius: 50%;
    overflow: hidden;
    background: #fff;
  }

  .silhouette {
    display: block;
    width: 100%;
    fill: #467e44;
  }

  .clock {
    margin: 0 34px 0 38px;
    line-height: 28px;
    text-align: center;
    color: #e2e4ea;
  }

  .sun {
    flex: none;
    width: 48px;
    height: 48px;
    margin-right: -8px;
    fill: none;
    stroke: #f5cf57;
    stroke-width: 4;
    stroke-linecap: round;
  }

  /* Page */
  main {
    padding-top: 28px;
    background: linear-gradient(#ededee, #ebedee 34%, #e6e8ea 60%, #e4e7ea);
  }

  .title-row {
    display: flex;
    align-items: center;
    justify-content: space-between;
    padding: 0 10px 0 28px;
  }

  h1 {
    font-size: 48px;
    line-height: 60px;
  }

  .page-actions {
    display: flex;
    gap: 6px;
  }

  .page-actions button {
    display: flex;
    align-items: center;
    height: 62px;
    padding: 0 36px 0 30px;
    border-radius: 8px;
    background: #163b6d;
    color: #fff;
    font-size: 24px;
    font-weight: bold;
  }

  .icon-box {
    display: flex;
    justify-content: center;
    width: 30px;
    margin-right: 9px;
    color: #c9d8e9;
  }

  .columns {
    display: grid;
    grid-template-columns: 642fr 1342fr 642fr;
    gap: 56px;
    padding: 70px 24px 56px 56px;
  }

  .column {
    display: flex;
    flex-direction: column;
    gap: 84px;
    min-width: 0;
  }

  .panel {
    position: relative;
    border: 2px solid #5f70a0;
    border-radius: 8px;
    background: #dde1eb;
    box-shadow: 0 2px 4px rgba(60, 70, 100, 0.2);
  }

  .panel-body {
    padding: 22px 28px 28px;
  }

  .empty {
    padding-bottom: 50px;
  }

  .tag {
    display: flex;
    align-items: center;
    gap: 25px;
    box-sizing: border-box;
    width: fit-content;
    height: 60px;
    margin: -34px 0 0 16px;
    padding: 0 20px 0 21px;
    border: 4px solid #5f70a0;
    border-radius: 8px;
    background: #fff;
    font-size: 34px;
    font-weight: bold;
    line-height: 40px;
  }

  .tag h2 {
    font-size: 34px;
  }

  .tag.guest {
    gap: 25px;
    padding: 0 19px 0 22px;
  }

  .add {
    font-size: 34px;
    color: #1b8832;
  }

  .card {
    position: relative;
    overflow: hidden;
    border: 2px solid #86978a;
    border-radius: 8px;
    background: #fff;
  }

  .card-body {
    display: flex;
    justify-content: space-between;
    align-items: flex-start;
    padding: 28px;
  }

  .strong {
    font-weight: bold;
  }

  .corner {
    position: absolute;
    top: 0;
    left: 0;
    clip-path: polygon(0 0, 100% 0, 0 100%);
  }

  .corner.star {
    width: 48px;
    height: 48px;
    box-sizing: border-box;
    padding: 7px 5px;
    background: #ffaf30;
    color: #3a2a12;
    font-size: 16px;
  }

  .corner.here {
    width: 96px;
    height: 96px;
    box-sizing: border-box;
    padding: 16px 14px;
    background: #1b8832;
    color: #fff;
    font-size: 26px;
  }

  .button-group {
    display: flex;
    flex: none;
    border: 2px solid #d9d9d9;
    border-radius: 8px;
  }

  .button-group button {
    display: flex;
    align-items: center;
    justify-content: center;
    width: 61px;
    height: 58px;
    font-size: 26px;
    opacity: 0.92;
  }

  .button-group button + button {
    border-left: 2px solid #d9d9d9;
    width: 63px;
  }

  /* Guest */
  .guest-info {
    display: flex;
    justify-content: space-between;
    padding: 2px 28px 28px;
    border-bottom: 2px solid #c2c7d5;
  }

  .guest-text {
    padding-top: 36px;
  }

  .guest-name {
    font-size: 30px;
    font-weight: bold;
  }

  .dates {
    display: flex;
    align-items: center;
    margin-left: 4px;
  }

  .dates span {
    margin: 0 9px 0 18px;
  }

  .dates .red {
    font-size: 31px;
  }

  .guest-text .pill {
    margin: 14px 4px 0;
  }

  .photo {
    box-sizing: border-box;
    width: 130px;
    height: 130px;
    border: 2px solid #c2c7d3;
    border-radius: 50%;
    overflow: hidden;
  }

  .guest-email {
    display: flex;
    align-items: center;
    gap: 9px;
    height: 94px;
    padding: 0 30px;
  }

  .country {
    display: flex;
    align-items: center;
    gap: 14px;
  }

  .flag {
    width: 32px;
    height: 22px;
  }

  .address-side {
    text-align: right;
  }

  .address-side > div:last-child {
    margin-top: 2px;
  }

  .note-footer {
    padding: 11px 28px;
    border-top: 2px solid #e0e0ae;
    background: #ffffcb;
    font-size: 22px;
  }

  .cursor {
    position: absolute;
    z-index: 2;
    top: 24px;
    left: 205px;
    width: 24px;
    height: 38px;
    fill: #000;
    stroke: #fff;
    stroke-width: 2;
  }

  /* Reservations */
  .reservations {
    display: flex;
    flex-direction: column;
    min-width: 0;
  }

  .tabs {
    display: flex;
    gap: 33px;
    padding: 0 18px 0 2px;
  }

  .tabs > :global(:first-child) {
    margin-right: auto;
  }

  .tab {
    position: relative;
    gap: 12px;
    margin-left: 0;
    padding: 0 20px 0 24px;
  }

  .active::after {
    content: "";
    position: absolute;
    top: 43px;
    left: 50%;
    width: 20px;
    height: 20px;
    margin-left: -11px;
    border: solid #5f70a0;
    border-width: 0 2px 2px 0;
    background: linear-gradient(135deg, transparent 50%, #fff 50%);
    transform: rotate(45deg);
  }

  .list {
    flex: none;
    width: 34px;
    height: 32px;
    fill: currentColor;
  }

  .scroll-area {
    flex: 1;
    display: flex;
    padding: 16px 28px 28px;
  }

  .scroll-content {
    flex: 1;
    min-width: 0;
  }

  .scrollbar {
    width: 20px;
    margin-top: 6px;
    background: #c3c7d4;
  }

  .thumb {
    height: 59%;
    border-radius: 10px;
    background: #8b8e98;
  }

  .section {
    margin-bottom: 48px;
  }

  .section-title {
    display: flex;
    align-items: center;
    gap: 27px;
    margin-bottom: 28px;
    padding: 0 5px 9px;
    border-bottom: 2px solid #bfc3cf;
    font-size: 53px;
  }

  h3 {
    font-size: 36px;
    line-height: 40px;
  }

  .reservation {
    padding-bottom: 28px;
  }

  .row {
    display: flex;
    align-items: flex-start;
    padding: 26px 28px 0;
  }

  .row-icon {
    display: flex;
    justify-content: center;
    width: 48px;
    margin-right: 21px;
    padding-top: 8px;
    font-size: 42px;
  }

  .row-text {
    flex: 1;
    margin-bottom: 26px;
  }

  .muted {
    font-size: 26px;
    color: rgba(20, 20, 20, 0.66);
  }

  .pills {
    display: flex;
    gap: 16px;
    padding: 0 32px;
  }

  .pills + .pills {
    margin-top: 12px;
  }

  .pill {
    display: flex;
    align-items: center;
    gap: 17px;
    box-sizing: border-box;
    height: 56px;
    padding: 0 20px;
    border: 2px solid #f2f2f2;
    border-radius: 8px;
    background: #fff;
    font-size: 24px;
    font-weight: bold;
  }

  .pill.checked-in {
    border-color: #5b4672;
    background: #5b4672;
    color: #fff;
  }

  .pill.accepted {
    border-color: #1a5499;
    background: #1a5499;
    color: #fff;
  }

  .pill.arrive {
    border-color: #f3f3bf;
    background: #ffffcb;
  }

  .pill.primary {
    gap: 6px;
  }

  .starred {
    position: relative;
  }

  .starred .yellow {
    position: absolute;
    top: 12px;
    left: 17px;
    font-size: 12px;
  }

  .pill.outline {
    border-color: #1f2021;
  }

  .pill.due {
    border-color: #9f2727;
    color: #9f2727;
  }

  .pill.paid {
    border-color: #1b8832;
    color: #1b8832;
  }

  .pill.balance {
    gap: 24px;
  }

  .invoice {
    border-top: 2px solid #b5d5d8;
    padding-bottom: 28px;
    background: #cff0f6;
  }

  .invoice .row-text {
    margin-bottom: 0;
  }

  .invoice-actions {
    display: flex;
    gap: 16px;
    margin: 14px 4px 0;
  }

  /* Soft shade rising over the bottom edge of the list */
  .bottom-shadow {
    position: absolute;
    top: 100%;
    left: 35%;
    width: 34%;
    height: 10px;
    box-shadow: 0 0 60px 0 rgba(40, 40, 70, 0.2);
  }
</style>
